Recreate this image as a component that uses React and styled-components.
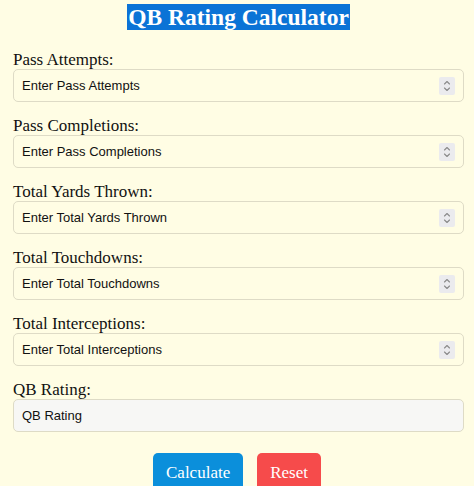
import styled, { createGlobalStyle } from 'styled-components';

const GlobalStyle = createGlobalStyle`
  html, body {
    margin: 0;
    padding: 0;
    background: #fffde4;
  }
`;

const fields = [
  { label: 'Pass Attempts:', placeholder: 'Enter Pass Attempts' },
  { label: 'Pass Completions:', placeholder: 'Enter Pass Completions' },
  { label: 'Total Yards Thrown:', placeholder: 'Enter Total Yards Thrown' },
  { label: 'Total Touchdowns:', placeholder: 'Enter Total Touchdowns' },
  { label: 'Total Interceptions:', placeholder: 'Enter Total Interceptions' },
];

const Spinner = () => (
  <SpinBox>
    <svg width="8" height="14" viewBox="0 0 8 14" fill="none" stroke="#8a8a8a" strokeWidth="1.1" strokeLinecap="round" strokeLinejoin="round">
      <path d="M1.5 5 L4 2.5 L6.5 5" />
      <path d="M1.5 9 L4 11.5 L6.5 9" />
    </svg>
  </SpinBox>
);

const App = () => {
  return (
    <Page>
      <GlobalStyle />
      <TitleRow>
        <Title>QB Rating Calculator</Title>
      </TitleRow>
      <Form>
        {fields.map((f) => (
          <Field key={f.label}>
            <Label>{f.label}</Label>
            <InputBox>
              <Placeholder>{f.placeholder}</Placeholder>
              <Spinner />
            </InputBox>
          </Field>
        ))}
        <Field>
          <Label>QB Rating:</Label>
          <InputBox $readonly>
            <Placeholder>QB Rating</Placeholder>
          </InputBox>
        </Field>
        <Buttons>
          <Button $bg="#0b8fdb">Calculate</Button>
          <Button $bg="#f64b4b">Reset</Button>
        </Buttons>
      </Form>
    </Page>
  );
};

export default App;

const Page = styled.div`
  display: flex;
  flex-direction: column;
  min-height: 486px;
  padding: 4px 10px 0 13px;
  box-sizing: border-box;
  font-family: 'Liberation Serif', 'Times New Roman', serif;
`;

const TitleRow = styled.div`
  display: flex;
  justify-content: center;
  margin-bottom: 20px;
`;

const Title = styled.h1`
  margin: 0;
  font-size: 23.5px;
  line-height: 26px;
  font-weight: bold;
  color: #fff;
  background: #0b73d6;
  padding: 0 1px;
`;

const Form = styled.div`
  display: flex;
  flex-direction: column;
  gap: 14px;
`;

const Field = styled.div`
  display: flex;
  flex-direction: column;
`;

const Label = styled.label`
  font-size: 17px;
  line-height: 19px;
  color: #111;
`;

const InputBox = styled.div`
  display: flex;
  align-items: center;
  justify-content: space-between;
  height: 33px;
  box-sizing: border-box;
  padding: 0 8px;
  border: 1px solid #dedbc6;
  border-radius: 5px;
  background: ${(p) => (p.$readonly ? '#f7f7f5' : '#fffde4')};
`;

const Placeholder = styled.span`
  font-family: 'Liberation Sans', Arial, sans-serif;
  font-size: 13px;
  color: #111;
`;

const SpinBox = styled.div`
  display: flex;
  align-items: center;
  justify-content: center;
  width: 16px;
  height: 18px;
  background: #ebebee;
  border-radius: 2px;
`;

const Buttons = styled.div`
  display: flex;
  justify-content: center;
  gap: 14px;
  margin-top: 7px;
  padding-right: 3px;
`;

const Button = styled.button`
  font-family: 'Liberation Serif', 'Times New Roman', serif;
  font-size: 17px;
  color: #fff;
  background: ${(p) => p.$bg};
  border: none;
  border-radius: 5px;
  height: 40px;
  padding: 0 13px;
  cursor: pointer;
`;
